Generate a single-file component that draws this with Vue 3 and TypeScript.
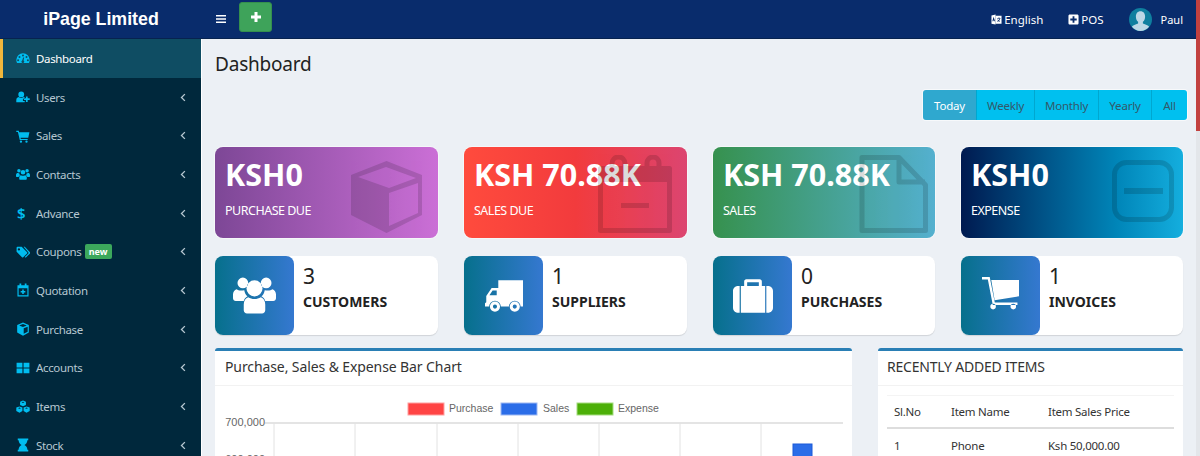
<script setup lang="ts">
const icons: Record<string, string> = {
  gauge: "M12 4A11.500 11.500 0 0 0 .5 15.500c0 1.900.5 3.600 1.300 5h20.400c.8-1.400 1.300-3.100 1.300-5A11.500 11.500 0 0 0 12 4zM12 6a1.700 1.700 0 1 1 0 3.400A1.700 1.700 0 0 1 12 6zM6 8.600A1.700 1.700 0 1 1 6 12a1.700 1.700 0 0 1 0-3.400zM3.600 14a1.700 1.700 0 1 1 0 3.400 1.700 1.700 0 0 1 0-3.400zM20.400 14a1.700 1.700 0 1 1 0 3.400 1.700 1.700 0 0 1 0-3.400zM18 8.600a1.700 1.700 0 1 1 0 3.400 1.700 1.700 0 0 1 0-3.400zM14 11l-1 5.200a2.400 2.400 0 1 1-2.400-.1L12.200 11z",
  userPlus: "M9 2.500a5 5 0 1 1 0 10 5 5 0 0 1 0-10zM.5 21v-3.500c0-3 1.500-5 4.300-5.500 1.200 1 2.600 1.600 4.200 1.600s3-.6 4.200-1.600c.6.100 1.200.3 1.700.6v2.400h-3v4h3V21zM17 11h3v3h3.500v3H20v3.500h-3V17h-3.500v-3H17z",
  cart: "M.5 3h4.300l.5 2.500H23l-2 9.500H7.800l.4 2H20v2H6.500L3.300 5H.5zM8.500 19.500a2 2 0 1 1 0 4 2 2 0 0 1 0-4zM18 19.500a2 2 0 1 1 0 4 2 2 0 0 1 0-4z",
  users: "M5 3.500a3 3 0 1 1 0 6 3 3 0 0 1 0-6zM19 3.500a3 3 0 1 1 0 6 3 3 0 0 1 0-6zM12 5a4 4 0 1 1 0 8 4 4 0 0 1 0-8zM1 11c.8-.8 1.800-1 2.500-.6.7.5 1.500.7 2.300.7.1 1.200.5 2.100 1.200 2.900-1.300.5-2.200 1.600-2.500 3H1c-.6 0-1-.4-1-1v-2c0-1.100.4-2.200 1-3zM23 11c.6.8 1 1.900 1 3v2c0 .6-.4 1-1 1h-3.500c-.3-1.400-1.200-2.500-2.500-3 .7-.8 1.100-1.700 1.200-2.900.8 0 1.600-.2 2.300-.7.7-.4 1.700-.2 2.500.6zM8.500 14c1 .8 2.200 1.200 3.500 1.200s2.500-.4 3.500-1.200c1.800.2 3 1.800 3 4v2c0 1.100-.9 2-2 2h-9c-1.100 0-2-.9-2-2v-2c0-2.200 1.200-3.800 3-4z",
  tags: "M1 4.500C1 3.700 1.700 3 2.500 3h7.200L19 12.300c.6.600.6 1.500 0 2.100l-6.600 6.600c-.6.600-1.500.6-2.100 0L1 11.700zM5 5.500a2 2 0 1 0 0 4 2 2 0 0 0 0-4zM13 3h2l9 9.300c.6.600.6 1.500 0 2.100L17.400 21c-.6.600-1.500.6-2.100 0l-.3-.3 6-6c.6-.6.6-1.700 0-2.400z",
  calendarPlus: "M6 1h3v3h6V1h3v3h3.500v19h-19V4H6zM4.500 9v12h15V9zM10.700 11h2.600v2.700H16v2.600h-2.700V19h-2.600v-2.700H8v-2.600h2.700z",
  cube: "M12 1l10 4v13l-10 5.500L2 18V5zM12 3.600L5.500 6 12 8.500 18.500 6zM13.200 10.700v9.500L20 16.500V8z",
  grid: "M1 3h10v8H1zM13 3h10v8H13zM1 13h10v8H1zM13 13h10v8H13z",
  cubes: "M12 1l5 2v5.500l-5 2.200-5-2.200V3zM6 11l5 2v6l-5 3-5.500-3v-6zM18 11l5.500 2v6L18 22l-5-3v-6zM12 3l-2.500 1L12 5l2.500-1zM6 13l-2.500 1L6 15l2.500-1zM18 13l-2.500 1 2.500 1 2.500-1z",
  hourglass: "M3 1h18v3h-1.500c0 4-2.500 6.500-5 8 2.500 1.500 5 4 5 8H21v3H3v-3h1.500c0-4 2.500-6.500 5-8-2.500-1.500-5-4-5-8H3z",
  people: "M5.500 2a3 3 0 1 1 0 6 3 3 0 0 1 0-6zM18.500 2a3 3 0 1 1 0 6 3 3 0 0 1 0-6zM12 3.500a4.500 4.500 0 1 1 0 9 4.500 4.500 0 0 1 0-9zM2 8.500C3 9.300 4.500 9.300 6.300 9c.2 1.400.8 2.600 1.800 3.400C7 13 6.300 14 6 15H1.500C.7 15 0 14.300 0 13.500v-2c0-1.400.8-2.500 2-3zM22 8.500c1.200.5 2 1.600 2 3v2c0 .8-.7 1.500-1.500 1.500H18c-.3-1-1-2-2.100-2.600 1-.8 1.600-2 1.800-3.400 1.800.3 3.300.3 4.300-.5zM8.500 13c1 .7 2.200 1 3.500 1s2.500-.3 3.500-1c1.500.5 2.500 2 2.500 4v3.200c0 1-.8 1.800-1.800 1.800H7.800c-1 0-1.800-.8-1.800-1.800V17c0-2 1-3.500 2.500-4z",
  truck: "M8.400 2H24v16.700h-1.500a3.700 3.700 0 0 0-7.400 0H10a3.700 3.700 0 0 0-7.400 0H0v-2.200l.8-.5v-4L4.200 7h4.200zM4.800 8.600l-2 3h4.600v-3zM6.300 15.500a3.200 3.200 0 1 1 0 6.400 3.200 3.200 0 0 1 0-6.400zM6.300 17.400a1.300 1.300 0 1 0 0 2.600 1.300 1.300 0 0 0 0-2.600zM18.800 15.500a3.200 3.200 0 1 1 0 6.400 3.200 3.200 0 0 1 0-6.400zM18.800 17.400a1.300 1.300 0 1 0 0 2.600 1.300 1.300 0 0 0 0-2.600z",
  briefcase: "M8 2h8c.8 0 1.300.6 1.300 1.300V6H21c1.700 0 3 1.300 3 3v10c0 1.700-1.300 3-3 3h-1V6h-.7v16H4.700V6H4v16H3c-1.700 0-3-1.300-3-3V9c0-1.700 1.300-3 3-3h3.700V3.300C6.700 2.600 7.200 2 8 2zM8.500 3.700V6h7V3.700z",
  shopCart: "M0 0h5l3.300 16.500H23v1.700H7L3.800 1.700H0zM6 2h18v10.500L8.200 15zM7.200 17.400a1.800 1.800 0 1 1 0 3.600 1.800 1.800 0 0 1 0-3.600zM20.300 17.400a1.800 1.800 0 1 1 0 3.600 1.800 1.800 0 0 1 0-3.600z",
  bars: "M2 4h20v3.200H2zM2 10.400h20v3.200H2zM2 16.800h20V20H2z",
  plusBox: "M4 1h16c1.700 0 3 1.300 3 3v16c0 1.700-1.300 3-3 3H4c-1.700 0-3-1.300-3-3V4c0-1.700 1.300-3 3-3zM10 5v5H5v4h5v5h4v-5h5v-4h-5V5z",
  plus: "M9 2h6v7h7v6h-7v7H9v-7H2V9h7z",
  language: "M1 3l9-2v22l-9-2zM10.500 4H23v17H10.500zM5.500 6L3 16h1.800l.4-1.800h1.600l.4 1.800H9zM17 7l-.8 2h-3v1.600h5c-.4 1.200-1 2.200-1.800 3-.5-.5-.9-1-1.200-1.600l-1.300.6c.4.800.9 1.400 1.500 2l-2 1.300.9 1.200 2.300-1.500 2.200 1.500.8-1.200-1.900-1.300c1-1 1.800-2.300 2.200-4H21V9h-3l.5-1.600z"
};

// big faded card icons, drawn on an 85x78 box
const bigIcons: Record<string, { solid: string; line?: string }> = {
  cube: {
    solid: "M38.500 6L74 20v40L38.500 78 3 60V20zM38 12L68 23 41 33 10 22zM41 38l29-10v30L41 71z"
  },
  clipboard: {
    solid: "M3 12h70v15H3zM24 48h28v5H24z",
    line: "M3.500 13.500h69v62h-69zM15 8.500a6.500 6.500 0 0 1 13 0v9a6.500 6.500 0 0 1-13 0zM50 8a6 6 0 0 1 12 0v10a6 6 0 0 1-12 0z"
  },
  doc: {
    solid: "",
    line: "M17 2.500h37L80.500 30v45.500H17zM54 3v24h26"
  },
  minus: {
    solid: "M31 33h39v6H31z",
    line: "M33.500 7.500h33a12 12 0 0 1 12 12v33a12 12 0 0 1-12 12h-33a12 12 0 0 1-12-12v-33a12 12 0 0 1 12-12z"
  }
};

const menu = [
  { label: "Dashboard", icon: "gauge", active: true },
  { label: "Users", icon: "userPlus" },
  { label: "Sales", icon: "cart" },
  { label: "Contacts", icon: "users" },
  { label: "Advance", glyph: "$" },
  { label: "Coupons", icon: "tags", badge: "new" },
  { label: "Quotation", icon: "calendarPlus" },
  { label: "Purchase", icon: "cube" },
  { label: "Accounts", icon: "grid" },
  { label: "Items", icon: "cubes" },
  { label: "Stock", icon: "hourglass" }
];

const ranges = ["Today", "Weekly", "Monthly", "Yearly", "All"];

const stats = [
  { value: "KSH0", label: "PURCHASE DUE", icon: "cube", cls: "purple" },
  { value: "KSH 70.88K", label: "SALES DUE", icon: "clipboard", cls: "red" },
  { value: "KSH 70.88K", label: "SALES", icon: "doc", cls: "green" },
  { value: "KSH0", label: "EXPENSE", icon: "minus", cls: "navy" }
];

const counts = [
  { n: 3, label: "CUSTOMERS", icon: "people", size: 43 },
  { n: 1, label: "SUPPLIERS", icon: "truck", size: 38 },
  { n: 0, label: "PURCHASES", icon: "briefcase", size: 40 },
  { n: 1, label: "INVOICES", icon: "shopCart", size: 37 }
];

const legend = [
  { name: "Purchase", x: 193, tx: 234, fill: "#ff4444", line: "#ffa0a0" },
  { name: "Sales", x: 286, tx: 328, fill: "#2b6de8", line: "#9db8f2" },
  { name: "Expense", x: 362, tx: 403, fill: "#4caf08", line: "#a5dc80" }
];

const gridX = [59, 140, 222, 303, 384, 465, 546];
</script>

<template>
  <div class="page">
    <div class="shell">
      <header class="navbar">
        <div class="brand">iPage Limited</div>
        <svg class="bars" viewBox="0 0 24 24"><path :d="icons.bars" /></svg>
        <button class="add-btn">
          <svg viewBox="0 0 24 24"><path :d="icons.plus" /></svg>
        </button>
        <div class="nav-right">
          <span class="nav-link">
            <svg viewBox="0 0 24 24"><path :d="icons.language" fill-rule="evenodd" /></svg>English
          </span>
          <span class="nav-link">
            <svg viewBox="0 0 24 24"><path :d="icons.plusBox" fill-rule="evenodd" /></svg>POS
          </span>
          <span class="user">
            <svg class="avatar" viewBox="0 0 24 24">
              <circle cx="12" cy="12" r="12" fill="#0f7f9f" />
              <path d="M12 3.500c3 0 4.800 2.300 4.800 5.500 0 2.200-.9 4.300-2.300 5.400v1.800c2.800 1 5.500 2 6.500 3.400A12 12 0 0 1 12 24a12 12 0 0 1-9-4.400c1-1.400 3.700-2.400 6.500-3.400v-1.800C8.100 13.300 7.200 11.200 7.200 9c0-3.200 1.800-5.500 4.800-5.500z" fill="#bcd8e6" />
            </svg>
            Paul
          </span>
        </div>
      </header>

      <div class="body">
        <aside class="sidebar">
          <div v-for="item in menu" :key="item.label" class="menu-item" :class="{ active: item.active }">
            <span class="menu-icon">
              <svg v-if="item.icon" viewBox="0 0 24 24"><path :d="icons[item.icon]" fill-rule="evenodd" /></svg>
              <span v-else class="dollar">{{ item.glyph }}</span>
            </span>
            <span class="menu-label">{{ item.label }}</span>
            <span v-if="item.badge" class="badge">{{ item.badge }}</span>
            <svg v-if="!item.active" class="chevron" viewBox="0 0 8 12"><path d="M6.500 1.500L2 6l4.500 4.500" /></svg>
          </div>
        </aside>

        <main class="content">
          <h1 class="title">Dashboard</h1>

          <div class="range-row">
            <div class="range-group">
              <span v-for="(r, i) in ranges" :key="r" class="range" :class="{ on: i === 0 }">{{ r }}</span>
            </div>
          </div>

          <section class="cards">
            <div v-for="s in stats" :key="s.label" class="stat" :class="s.cls">
              <div class="stat-value">{{ s.value }}</div>
              <div class="stat-label">{{ s.label }}</div>
              <svg class="stat-icon" viewBox="0 0 85 78">
                <path v-if="bigIcons[s.icon].solid" :d="bigIcons[s.icon].solid" fill-rule="evenodd" />
                <path v-if="bigIcons[s.icon].line" :d="bigIcons[s.icon].line" class="icon-line" />
              </svg>
            </div>
          </section>

          <section class="cards counts">
            <div v-for="c in counts" :key="c.label" class="count">
              <div class="count-icon">
                <svg viewBox="0 0 24 24" :style="{ width: c.size + 'px', height: c.size + 'px' }">
                  <path :d="icons[c.icon]" fill-rule="evenodd" />
                </svg>
              </div>
              <div class="count-text">
                <div class="count-n">{{ c.n }}</div>
                <div class="count-label">{{ c.label }}</div>
              </div>
            </div>
          </section>

          <section class="panels">
            <div class="panel">
              <div class="panel-head">Purchase, Sales &amp; Expense Bar Chart</div>
              <svg class="chart" width="636" height="120" viewBox="0 0 636 120">
                <g v-for="l in legend" :key="l.name">
                  <rect :x="l.x" y="17" width="36" height="12" :fill="l.fill" :stroke="l.line" />
                  <text :x="l.tx" y="26" class="legend-text">{{ l.name }}</text>
                </g>
                <line x1="50" x2="628" y1="37" y2="37" stroke="#e4e4e4" stroke-width="2" />
                <line v-for="x in gridX" :key="x" :x1="x" :x2="x" y1="37" y2="120" stroke="#e2e2e2" />
                <text x="50" y="40" text-anchor="end" class="tick">700,000</text>
                <text x="50" y="77" text-anchor="end" class="tick">600,000</text>
                <rect x="578" y="58" width="19" height="62" fill="#2b6de8" stroke="#1c5bd8" />
              </svg>
            </div>

            <div class="panel side">
              <div class="panel-head">RECENTLY ADDED ITEMS</div>
              <div class="table-wrap">
                <table>
                  <thead>
                    <tr><th>Sl.No</th><th>Item Name</th><th>Item Sales Price</th></tr>
                  </thead>
                  <tbody>
                    <tr><td>1</td><td>Phone</td><td>Ksh 50,000.00</td></tr>
                  </tbody>
                </table>
              </div>
            </div>
          </section>
        </main>
      </div>
    </div>
    <div class="scrollbar"><div class="thumb"></div></div>
  </div>
</template>

<style>
html, body {
  margin: 0;
  overflow: hidden;
}
</style>

<style scoped>
.page {
  display: flex;
  width: 1200px;
  height: 456px;
  overflow: hidden;
  font-family: "Noto Sans", "Open Sans", sans-serif;
  background: #ecf0f5;
  color: #222;
}

.shell {
  flex: 1;
  min-width: 0;
  display: flex;
  flex-direction: column;
}

.scrollbar {
  width: 4px;
  background: #e3e6ea;
}

.thumb {
  height: 131px;
  background: #c2413f;
}

.navbar {
  height: 39px;
  flex: none;
  display: flex;
  align-items: center;
  background: #092c6c;
  border-bottom: 1px solid #07234f;
  box-sizing: border-box;
  color: #fff;
}

.brand {
  width: 202px;
  margin-right: 13px;
  text-align: center;
  font: bold 17.800px "Liberation Sans", Arial, sans-serif;
}

.bars {
  width: 12px;
  height: 12px;
  fill: #fff;
}

.add-btn {
  margin-left: 12px;
  margin-top: -4px;
  width: 33px;
  height: 30px;
  display: flex;
  align-items: center;
  justify-content: center;
  background: #3ea35a;
  border: 1px solid #358f4d;
  border-radius: 3px;
  padding: 0;
}

.add-btn svg {
  width: 12px;
  height: 12px;
  fill: #fff;
}

.nav-right {
  margin-left: auto;
  margin-right: 13px;
  display: flex;
  align-items: center;
  font-size: 11.500px;
}

.nav-link {
  display: flex;
  align-items: center;
  gap: 2px;
  margin-right: 25px;
}

.nav-link svg {
  width: 11px;
  height: 11px;
  fill: #fff;
}

.user {
  display: flex;
  align-items: center;
  gap: 9px;
  font-size: 11px;
}

.avatar {
  width: 23px;
  height: 23px;
}

.body {
  flex: 1;
  min-height: 0;
  display: flex;
}

.sidebar {
  width: 201px;
  flex: none;
  background: #00283c;
  border-right: 1px solid #fff;
}

.menu-item {
  height: 38.700px;
  display: flex;
  align-items: center;
  padding-left: 16px;
  color: #b6c7d1;
  font-size: 11.500px;
  letter-spacing: -0.35px;
}

.menu-item.active {
  background: #0f4d63;
  border-left: 3px solid #f0b73c;
  padding-left: 13px;
  color: #fff;
}

.menu-icon {
  width: 20px;
  flex: none;
  display: flex;
  align-items: center;
}

.menu-icon svg {
  width: 14px;
  height: 14px;
  fill: #00bdf0;
}

.dollar {
  color: #00bdf0;
  font-size: 15px;
  font-weight: 600;
  padding-left: 1px;
}

.badge {
  margin-left: 3px;
  width: 27px;
  text-align: center;
  background: #3ca85c;
  border-radius: 2px;
  color: #fff;
  font-size: 9px;
  font-weight: 700;
  line-height: 15px;
  letter-spacing: 0;
}

.chevron {
  position: absolute;
  left: 180px;
  width: 6px;
  height: 9px;
  fill: none;
  stroke: #b6c7d1;
  stroke-width: 1.800;
}

.content {
  flex: 1;
  min-width: 0;
  padding: 0 13px;
}

.title {
  margin: 12px 0 0;
  font-size: 19px;
  font-weight: 400;
  line-height: 26px;
  letter-spacing: -0.2px;
}

.range-row {
  display: flex;
  justify-content: flex-end;
  margin: 13px -4px 0 0;
}

.range-group {
  display: grid;
  grid-template-columns: 54px 58px 64px 53px 35px;
  height: 30px;
  border-radius: 3px;
  overflow: hidden;
  box-shadow: 0 0 0 1px #f7f9fb;
}

.range {
  display: flex;
  align-items: center;
  justify-content: center;
  background: #00c0ef;
  border-right: 1px solid #00a7d0;
  color: #33586a;
  font-size: 11.500px;
  letter-spacing: -0.2px;
}

.range:last-child {
  border-right: 0;
}

.range.on {
  background: #2fa8cf;
  color: #fff;
}

.cards {
  display: grid;
  grid-template-columns: 223px 223px 222px 222px;
  column-gap: 26px;
  margin-top: 27px;
}

.stat {
  position: relative;
  height: 91px;
  box-sizing: border-box;
  padding: 7px 10px;
  border-radius: 8px;
  color: #fff;
  overflow: hidden;
  box-shadow: 0 0 0 1px #f5f7f9;
}

.purple { background: linear-gradient(90deg, #7d4796, #cb6fd6); }
.red { background: linear-gradient(90deg, #ff4b3d, #f23b3d 50%, #dc4570); }
.green { background: linear-gradient(90deg, #36914e, #54b0cf); }
.navy { background: linear-gradient(90deg, #001a50, #0085b8 70%, #14aede); }

.stat-value {
  font-size: 30.500px;
  font-weight: 700;
  line-height: 40px;
}

.stat-label {
  margin-top: 8px;
  font-size: 12.500px;
  line-height: 18px;
  letter-spacing: -0.5px;
}

.stat-icon {
  position: absolute;
  right: 5px;
  top: 8px;
  width: 85px;
  height: 78px;
  fill: #000;
  opacity: 0.14;
}

.icon-line {
  fill: none;
  stroke: #000;
  stroke-width: 5;
  stroke-linejoin: round;
}

.counts {
  margin-top: 18px;
}

.count {
  height: 79px;
  display: flex;
  background: #fff;
  border-radius: 8px;
  box-shadow: 0 1px 1px rgba(0, 0, 0, 0.12);
}

.count-icon {
  width: 79px;
  flex: none;
  display: flex;
  align-items: center;
  justify-content: center;
  background: linear-gradient(90deg, #06708c, #3578d0);
  border-radius: 8px;
}

.count-icon svg {
  fill: #fff;
}

.count-text {
  padding: 6px 0 0 9px;
}

.count-n {
  font-size: 21px;
  line-height: 28px;
}

.count-label {
  margin-top: 2px;
  font-size: 14px;
  font-weight: 700;
  line-height: 20px;
}

.panels {
  display: grid;
  grid-template-columns: 637px 305px;
  column-gap: 26px;
  margin-top: 13px;
}

.panel {
  background: #fff;
  border-top: 3px solid #2a7fb5;
  border-radius: 3px;
  height: 200px;
}

.panel-head {
  height: 35px;
  box-sizing: border-box;
  display: flex;
  align-items: center;
  padding: 0 0 3px 10px;
  border-bottom: 1px solid #f2f2f2;
  font-size: 14px;
  color: #333;
  letter-spacing: -0.1px;
}

.side .panel-head {
  padding-left: 9px;
  letter-spacing: -0.2px;
}

.chart {
  display: block;
}

.legend-text {
  font: 10.500px "Liberation Sans", Arial, sans-serif;
  fill: #666;
}

.tick {
  font: 11px "Liberation Sans", Arial, sans-serif;
  fill: #666;
}

.table-wrap {
  padding: 9px 9px 0;
}

table {
  width: 100%;
  table-layout: fixed;
  border-collapse: collapse;
  font-size: 11.500px;
  letter-spacing: -0.25px;
  color: #333;
}

th, td {
  text-align: left;
  font-weight: 400;
  padding: 0 0 0 7px;
}

th {
  height: 30px;
  padding-bottom: 1px;
  border-top: 1px solid #f4f4f4;
  border-bottom: 2px solid #ddd;
}

td {
  height: 32px;
}

th:nth-child(1) { width: 50px; }
th:nth-child(2) { width: 90px; }
</style>
